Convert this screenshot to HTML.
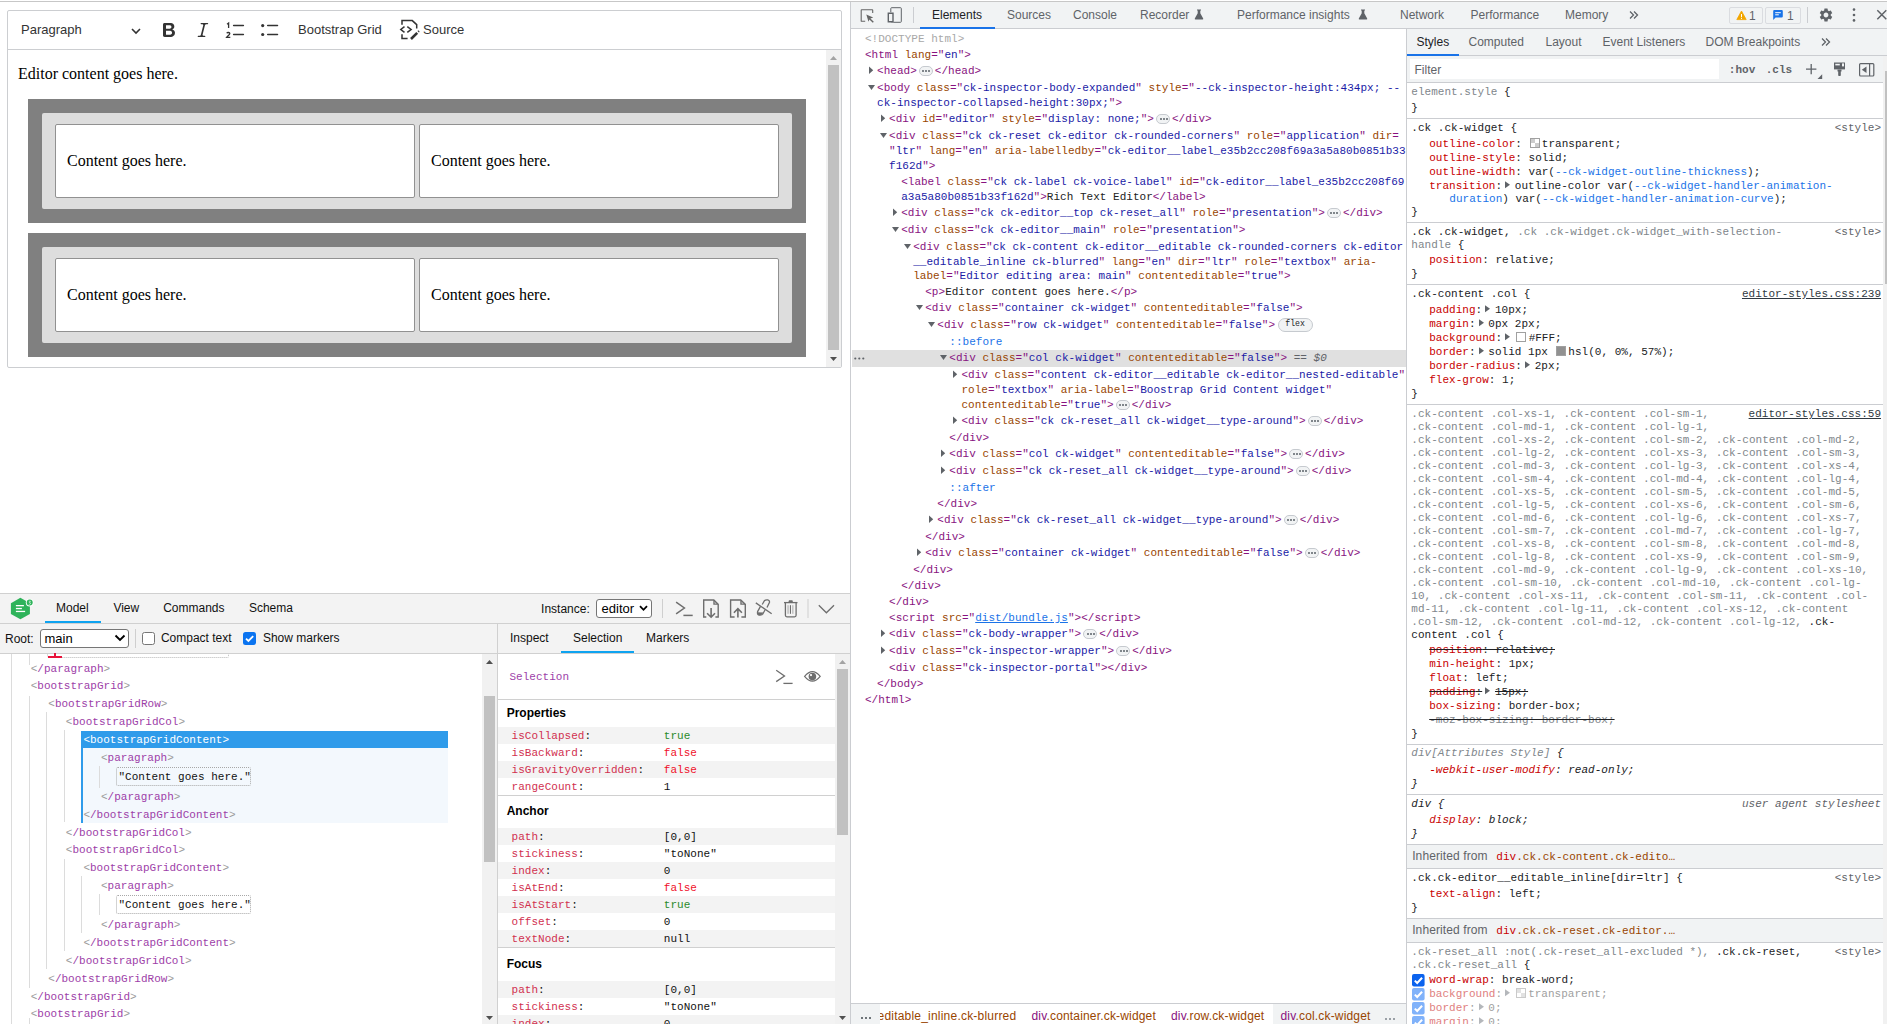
<!DOCTYPE html>
<html><head><meta charset="utf-8">
<style>
*{box-sizing:border-box}
html,body{margin:0;padding:0;width:1887px;height:1024px;overflow:hidden;background:#fff;position:relative}
.a{position:absolute}
.t{position:absolute;white-space:pre}
.col{position:absolute;background:#fff;border:1px solid #919191;border-radius:2px;width:360px;height:74px}
.tg{color:#881280}.an{color:#994500}.av{color:#1a1aa6}.tx{color:#222}
.el{display:inline-block;width:14px;height:10px;border:1px solid #c6cacf;border-radius:5px;background:#f1f3f4;margin:-6px 2px 0 2px;vertical-align:-2px;position:relative}
.el:after{content:"";position:absolute;left:2.5px;top:3px;width:2px;height:2px;background:#80868b;box-shadow:3px 0 0 #80868b,6px 0 0 #80868b}
</style></head><body>
<div class="a" style="left:0px;top:1px;width:1887px;height:1px;background:#c7c7c7;"></div>
<div class="a" style="left:7px;top:10px;width:835px;height:358px;background:none;border:1px solid #ccced1;border-radius:2px"></div>
<div class="a" style="left:8px;top:49px;width:833px;height:1px;background:#ccced1;"></div>
<div class="t" style="left:21px;top:23px;font:13px/13px 'Liberation Sans',sans-serif;color:#333;">Paragraph</div>
<svg class="a" style="left:130px;top:26px" width="12" height="10" viewBox="0 0 12 10"><path d="M2 3 L6 7 L10 3" fill="none" stroke="#333" stroke-width="1.6"/></svg>
<svg class="a" style="left:159px;top:20px" width="20" height="20" viewBox="0 0 20 20"><path fill="#333" d="M10.187 17H5.773c-.637 0-1.092-.138-1.364-.415-.273-.277-.409-.718-.409-1.323V4.738c0-.617.14-1.062.419-1.332.279-.27.73-.406 1.354-.406h4.68c.69 0 1.288.041 1.793.124.506.083.96.242 1.36.478.341.197.644.447.906.75a3.262 3.262 0 0 1 .808 2.162c0 1.401-.722 2.426-2.167 3.075C15.050 10.175 16 11.315 16 13.010a3.756 3.756 0 0 1-2.296 3.504 6.100 6.100 0 0 1-1.517.377c-.571.073-1.238.11-2 .11zm-.217-6.217H7v4.087h3.069c1.977 0 2.965-.69 2.965-2.072 0-.707-.256-1.220-.768-1.537-.512-.319-1.277-.478-2.296-.478zM7 5.130v3.619h2.606c.729 0 1.292-.067 1.690-.2a1.600 1.600 0 0 0 .910-.765c.165-.267.247-.566.247-.897 0-.707-.26-1.176-.778-1.409-.519-.232-1.310-.348-2.375-.348H7z"/></svg>
<svg class="a" style="left:193px;top:20px" width="20" height="20" viewBox="0 0 20 20"><path fill="#333" d="m9.586 14.633.021.004c-.036.335.095.655.393.962.082.083.173.15.274.201h1.474a.6.6 0 1 1 0 1.2H5.304a.6.6 0 0 1 0-1.2h1.15c.474-.07.809-.182 1.005-.334.157-.122.291-.32.404-.597l2.416-9.55a1.053 1.053 0 0 0-.281-.823 1.12 1.12 0 0 0-.442-.296H8.15a.6.6 0 0 1 0-1.2h6.443a.6.6 0 1 1 0 1.2h-1.195c-.376.056-.65.155-.823.296-.215.175-.423.439-.623.79l-2.366 9.347z"/></svg>
<svg class="a" style="left:220px;top:15px" width="70" height="30" viewBox="220 15 70 30"><g stroke="#333" stroke-width="1.5" stroke-linecap="round" fill="none"><path d="M233.6 25.6H243.4M233.6 34.5H243.4M267.7 25.6H277.5M267.7 34.5H277.5"/><path d="M227 24.2L228.6 23V28" stroke-width="1.3" stroke-linecap="butt"/><path d="M226.8 33.3C227.3 32.2 229.8 32.2 229.8 33.6C229.8 34.8 227.6 36 226.6 37.4H230.3" stroke-width="1.3" stroke-linecap="butt"/></g><circle cx="262.7" cy="25.6" r="1.6" fill="#333"/><circle cx="262.7" cy="34.5" r="1.6" fill="#333"/></svg>
<svg class="a" style="left:395px;top:15px" width="30" height="30" viewBox="395 15 30 30"><g stroke="#333" stroke-width="1.5" fill="none"><path d="M402 24.7V20.6H412.3L416.7 24.7V28.5"/><path d="M402 34.3V38.4H407.6"/><path d="M404.5 26.7L400.8 29.5L404.5 32.4M407.3 26.7L411.1 29.5L407.3 32.4"/><path d="M411 39L417.2 32.9" stroke-width="2.6"/><path d="M418.2 31.8L419 31" stroke-width="2"/></g></svg>
<div class="t" style="left:298px;top:23px;font:13px/13px 'Liberation Sans',sans-serif;color:#333;">Bootstrap Grid</div>
<div class="t" style="left:423px;top:23px;font:13px/13px 'Liberation Sans',sans-serif;color:#333;">Source</div>
<div class="t" style="left:18px;top:66px;font:16px/16px 'Liberation Serif',serif;color:#000;">Editor content goes here.</div>
<div class="a" style="left:28px;top:99px;width:778px;height:124px;background:#808080;"></div>
<div class="a" style="left:42px;top:113px;width:750px;height:96px;background:#dddddd;border-radius:2px"></div>
<div class="col" style="left:55px;top:124px"></div>
<div class="col" style="left:419px;top:124px"></div>
<div class="t" style="left:67px;top:153px;font:16px/16px 'Liberation Serif',serif;color:#000;">Content goes here.</div>
<div class="t" style="left:431px;top:153px;font:16px/16px 'Liberation Serif',serif;color:#000;">Content goes here.</div>
<div class="a" style="left:28px;top:233px;width:778px;height:124px;background:#808080;"></div>
<div class="a" style="left:42px;top:247px;width:750px;height:96px;background:#dddddd;border-radius:2px"></div>
<div class="col" style="left:55px;top:258px"></div>
<div class="col" style="left:419px;top:258px"></div>
<div class="t" style="left:67px;top:287px;font:16px/16px 'Liberation Serif',serif;color:#000;">Content goes here.</div>
<div class="t" style="left:431px;top:287px;font:16px/16px 'Liberation Serif',serif;color:#000;">Content goes here.</div>
<div class="a" style="left:826px;top:50px;width:15px;height:317px;background:#f1f1f1;"></div>
<div class="a" style="left:828px;top:65px;width:11px;height:285px;background:#c1c1c1;"></div>
<svg class="a" style="left:826px;top:50px" width="15" height="317"><path d="M4 10H11L7.5 6Z" fill="#a3a3a3"/><path d="M4 307H11L7.5 311Z" fill="#505050"/></svg>
<div class="a" style="left:850px;top:2px;width:1px;height:1022px;background:#cbcdd1;"></div>
<div class="a" style="left:851px;top:2px;width:1036px;height:26px;background:#f1f3f4;"></div>
<div class="a" style="left:851px;top:28px;width:1036px;height:1px;background:#cbcdd1;"></div>
<svg class="a" style="left:855px;top:3px" width="60" height="24" viewBox="855 3 60 24">
<path d="M865.2 21.3H861.6Q861.2 21.3 861.2 20.9V10.2Q861.2 9.8 861.6 9.8H872.3Q872.7 9.8 872.7 10.2V12.9" fill="none" stroke="#666" stroke-width="1.1"/>
<path d="M866.3 14.4L873.2 17.4L870.4 18.4L873.8 21.8L872.8 22.8L869.4 19.4L868.5 21.8Z" fill="#666"/>
<rect x="890.8" y="7.7" width="10.5" height="14.6" rx="0.8" fill="none" stroke="#5f6368" stroke-width="1"/>
<rect x="887.3" y="12.3" width="6.4" height="10.3" rx="0.6" fill="#f1f3f4"/>
<path d="M888.3 13.2H893V21.8H888.3Z" fill="none" stroke="#5f6368" stroke-width="1.4"/>
<rect x="913" y="7" width="1" height="16" fill="#cbcdd1"/>
</svg>
<div class="t" style="left:932px;top:9px;font:12px/12px 'Liberation Sans',sans-serif;color:#202124;">Elements</div>
<div class="t" style="left:1007px;top:9px;font:12px/12px 'Liberation Sans',sans-serif;color:#5f6368;">Sources</div>
<div class="t" style="left:1073px;top:9px;font:12px/12px 'Liberation Sans',sans-serif;color:#5f6368;">Console</div>
<div class="t" style="left:1140px;top:9px;font:12px/12px 'Liberation Sans',sans-serif;color:#5f6368;">Recorder</div>
<div class="t" style="left:1237px;top:9px;font:12px/12px 'Liberation Sans',sans-serif;color:#5f6368;">Performance insights</div>
<div class="t" style="left:1400px;top:9px;font:12px/12px 'Liberation Sans',sans-serif;color:#5f6368;">Network</div>
<div class="t" style="left:1470.5px;top:9px;font:12px/12px 'Liberation Sans',sans-serif;color:#5f6368;">Performance</div>
<div class="t" style="left:1565px;top:9px;font:12px/12px 'Liberation Sans',sans-serif;color:#5f6368;">Memory</div>
<div class="a" style="left:920px;top:27px;width:75px;height:2px;background:#1a73e8;"></div>
<svg class="a" style="left:1194px;top:9px" width="10" height="11" viewBox="0 0 10 11"><path d="M3 0.5H7V1.5H6.3V4.2L9.2 9.6Q9.5 10.5 8.6 10.5H1.4Q0.5 10.5 0.8 9.6L3.7 4.2V1.5H3Z" fill="#5f6368"/></svg>
<svg class="a" style="left:1358px;top:9px" width="10" height="11" viewBox="0 0 10 11"><path d="M3 0.5H7V1.5H6.3V4.2L9.2 9.6Q9.5 10.5 8.6 10.5H1.4Q0.5 10.5 0.8 9.6L3.7 4.2V1.5H3Z" fill="#5f6368"/></svg>
<svg class="a" style="left:1628px;top:9px" width="12" height="12" viewBox="0 0 12 12"><path d="M2 2.5L5.5 6L2 9.5M6 2.5L9.5 6L6 9.5" fill="none" stroke="#5f6368" stroke-width="1.3"/></svg>
<div class="a" style="left:1729px;top:7px;width:34px;height:17px;background:#f1f3f4;border:1px solid #dadce0;border-radius:2px"></div>
<svg class="a" style="left:1736px;top:10px" width="11" height="11" viewBox="0 0 11 11"><path d="M5.5 1L10.2 9.6H0.8Z" fill="#f2a600" stroke="#f2a600" stroke-width="0.8" stroke-linejoin="round"/><rect x="5" y="4" width="1" height="3.2" fill="#fff"/><rect x="5" y="7.9" width="1" height="1" fill="#fff"/></svg>
<div class="t" style="left:1749px;top:10px;font:12px/12px 'Liberation Sans',sans-serif;color:#5f6368;">1</div>
<div class="a" style="left:1765px;top:7px;width:36px;height:17px;background:#f1f3f4;border:1px solid #dadce0;border-radius:2px"></div>
<svg class="a" style="left:1772px;top:9px" width="12" height="12" viewBox="0 0 12 12"><path d="M2.3 1H9.7Q10.8 1 10.8 2.1V7.4Q10.8 8.5 9.7 8.5H3.6L1.2 10.9V2.1Q1.2 1 2.3 1Z" fill="#1a73e8"/><rect x="3.2" y="3.2" width="5.6" height="1" fill="#fff"/><rect x="3.2" y="5.3" width="3.6" height="1" fill="#fff"/></svg>
<div class="t" style="left:1787px;top:10px;font:12px/12px 'Liberation Sans',sans-serif;color:#5f6368;">1</div>
<div class="a" style="left:1807px;top:7px;width:1px;height:16px;background:#cbcdd1;"></div>
<svg class="a" style="left:1818px;top:7px" width="16" height="16" viewBox="0 0 24 24"><path fill="#5f6368" d="M19.14 12.94c.04-.3.06-.61.06-.94 0-.32-.02-.64-.07-.94l2.03-1.58a.49.49 0 0 0 .12-.61l-1.92-3.32a.488.488 0 0 0-.59-.22l-2.39.96c-.5-.38-1.03-.7-1.62-.94l-.36-2.54a.484.484 0 0 0-.48-.41h-3.84c-.24 0-.43.17-.47.41l-.36 2.54c-.59.24-1.13.57-1.62.94l-2.39-.96c-.22-.08-.47 0-.59.22L2.74 8.87c-.12.21-.08.47.12.61l2.03 1.58c-.05.3-.09.63-.09.94s.02.64.07.94l-2.03 1.58a.49.49 0 0 0-.12.61l1.92 3.32c.12.22.37.29.59.22l2.39-.96c.5.38 1.03.7 1.62.94l.36 2.54c.05.24.24.41.48.41h3.84c.24 0 .44-.17.47-.41l.36-2.54c.59-.24 1.13-.56 1.62-.94l2.39.96c.22.08.47 0 .59-.22l1.92-3.32c.12-.22.07-.47-.12-.61l-2.01-1.58zM12 15.6c-1.98 0-3.6-1.62-3.6-3.6s1.62-3.6 3.6-3.6 3.6 1.62 3.6 3.6-1.62 3.6-3.6 3.6z"/></svg>
<svg class="a" style="left:1850px;top:7px" width="8" height="16" viewBox="0 0 8 16"><circle cx="4" cy="2.6" r="1.3" fill="#5f6368"/><circle cx="4" cy="8" r="1.3" fill="#5f6368"/><circle cx="4" cy="13.4" r="1.3" fill="#5f6368"/></svg>
<svg class="a" style="left:1874px;top:7px" width="13" height="16" viewBox="0 0 13 16"><path d="M3.3 3.3L12.3 12.3M12.3 3.3L3.3 12.3" stroke="#5f6368" stroke-width="1.5"/></svg>
<div class="a" style="left:1406px;top:29px;width:1px;height:995px;background:#cbcdd1;"></div>
<div class="a" style="left:852px;top:350px;width:554px;height:17px;background:#e0e0e0;"></div>
<svg class="a" style="left:853px;top:356px" width="14" height="5"><circle cx="2.3" cy="2.5" r="1.1" fill="#5f6368"/><circle cx="6.3" cy="2.5" r="1.1" fill="#5f6368"/><circle cx="10.3" cy="2.5" r="1.1" fill="#5f6368"/></svg>
<div class="t" style="left:865.0px;top:34px;font:11px/11px 'Liberation Mono',monospace;color:#a8a8a8;letter-spacing:0.02px;">&lt;!DOCTYPE html&gt;</div>
<div class="t" style="left:865.0px;top:50px;font:11px/11px 'Liberation Mono',monospace;color:#222;letter-spacing:0.02px;"><span class="tg">&lt;html </span><span class="an">lang</span><span class="tg">="</span><span class="av">en</span><span class="tg">"&gt;</span></div>
<svg class="a" style="left:868.05px;top:66px" width="7" height="9"><path d="M1 0.4V7.9L5.2 4.15Z" fill="#5f6368"/></svg>
<div class="t" style="left:877.05px;top:66px;font:11px/11px 'Liberation Mono',monospace;color:#222;letter-spacing:0.02px;"><span class="tg">&lt;head&gt;</span><span class="el"></span><span class="tg">&lt;/head&gt;</span></div>
<svg class="a" style="left:867.05px;top:84px" width="9" height="7"><path d="M1 1H8L4.5 6Z" fill="#5f6368"/></svg>
<div class="t" style="left:877.05px;top:83px;font:11px/11px 'Liberation Mono',monospace;color:#222;letter-spacing:0.02px;"><span class="tg">&lt;body </span><span class="an">class</span><span class="tg">="</span><span class="av">ck-inspector-body-expanded</span><span class="tg">" </span><span class="an">style</span><span class="tg">="</span><span class="av">--ck-inspector-height:434px; --</span></div>
<div class="t" style="left:877.05px;top:98px;font:11px/11px 'Liberation Mono',monospace;color:#222;letter-spacing:0.02px;"><span class="av">ck-inspector-collapsed-height:30px;</span><span class="tg">"&gt;</span></div>
<svg class="a" style="left:880.10px;top:114px" width="7" height="9"><path d="M1 0.4V7.9L5.2 4.15Z" fill="#5f6368"/></svg>
<div class="t" style="left:889.1px;top:114px;font:11px/11px 'Liberation Mono',monospace;color:#222;letter-spacing:0.02px;"><span class="tg">&lt;div </span><span class="an">id</span><span class="tg">="</span><span class="av">editor</span><span class="tg">" </span><span class="an">style</span><span class="tg">="</span><span class="av">display: none;</span><span class="tg">"&gt;</span><span class="el"></span><span class="tg">&lt;/div&gt;</span></div>
<svg class="a" style="left:879.10px;top:132px" width="9" height="7"><path d="M1 1H8L4.5 6Z" fill="#5f6368"/></svg>
<div class="t" style="left:889.1px;top:131px;font:11px/11px 'Liberation Mono',monospace;color:#222;letter-spacing:0.02px;"><span class="tg">&lt;div </span><span class="an">class</span><span class="tg">="</span><span class="av">ck ck-reset ck-editor ck-rounded-corners</span><span class="tg">" </span><span class="an">role</span><span class="tg">="</span><span class="av">application</span><span class="tg">" </span><span class="an">dir</span><span class="tg">=</span></div>
<div class="t" style="left:889.1px;top:146px;font:11px/11px 'Liberation Mono',monospace;color:#222;letter-spacing:0.02px;"><span class="tg">"</span><span class="av">ltr</span><span class="tg">" </span><span class="an">lang</span><span class="tg">="</span><span class="av">en</span><span class="tg">" </span><span class="an">aria-labelledby</span><span class="tg">="</span><span class="av">ck-editor__label_e35b2cc208f69a3a5a80b0851b33</span></div>
<div class="t" style="left:889.1px;top:161px;font:11px/11px 'Liberation Mono',monospace;color:#222;letter-spacing:0.02px;"><span class="av">f162d</span><span class="tg">"&gt;</span></div>
<div class="t" style="left:901.15px;top:177px;font:11px/11px 'Liberation Mono',monospace;color:#222;letter-spacing:0.02px;"><span class="tg">&lt;label </span><span class="an">class</span><span class="tg">="</span><span class="av">ck ck-label ck-voice-label</span><span class="tg">" </span><span class="an">id</span><span class="tg">="</span><span class="av">ck-editor__label_e35b2cc208f69</span></div>
<div class="t" style="left:901.15px;top:192px;font:11px/11px 'Liberation Mono',monospace;color:#222;letter-spacing:0.02px;"><span class="av">a3a5a80b0851b33f162d</span><span class="tg">"&gt;</span><span class="tx">Rich Text Editor</span><span class="tg">&lt;/label&gt;</span></div>
<svg class="a" style="left:892.15px;top:208px" width="7" height="9"><path d="M1 0.4V7.9L5.2 4.15Z" fill="#5f6368"/></svg>
<div class="t" style="left:901.15px;top:208px;font:11px/11px 'Liberation Mono',monospace;color:#222;letter-spacing:0.02px;"><span class="tg">&lt;div </span><span class="an">class</span><span class="tg">="</span><span class="av">ck ck-editor__top ck-reset_all</span><span class="tg">" </span><span class="an">role</span><span class="tg">="</span><span class="av">presentation</span><span class="tg">"&gt;</span><span class="el"></span><span class="tg">&lt;/div&gt;</span></div>
<svg class="a" style="left:891.15px;top:226px" width="9" height="7"><path d="M1 1H8L4.5 6Z" fill="#5f6368"/></svg>
<div class="t" style="left:901.15px;top:225px;font:11px/11px 'Liberation Mono',monospace;color:#222;letter-spacing:0.02px;"><span class="tg">&lt;div </span><span class="an">class</span><span class="tg">="</span><span class="av">ck ck-editor__main</span><span class="tg">" </span><span class="an">role</span><span class="tg">="</span><span class="av">presentation</span><span class="tg">"&gt;</span></div>
<svg class="a" style="left:903.20px;top:243px" width="9" height="7"><path d="M1 1H8L4.5 6Z" fill="#5f6368"/></svg>
<div class="t" style="left:913.2px;top:242px;font:11px/11px 'Liberation Mono',monospace;color:#222;letter-spacing:0.02px;"><span class="tg">&lt;div </span><span class="an">class</span><span class="tg">="</span><span class="av">ck ck-content ck-editor__editable ck-rounded-corners ck-editor</span></div>
<div class="t" style="left:913.2px;top:257px;font:11px/11px 'Liberation Mono',monospace;color:#222;letter-spacing:0.02px;"><span class="av">__editable_inline ck-blurred</span><span class="tg">" </span><span class="an">lang</span><span class="tg">="</span><span class="av">en</span><span class="tg">" </span><span class="an">dir</span><span class="tg">="</span><span class="av">ltr</span><span class="tg">" </span><span class="an">role</span><span class="tg">="</span><span class="av">textbox</span><span class="tg">" </span><span class="an">aria-</span></div>
<div class="t" style="left:913.2px;top:271px;font:11px/11px 'Liberation Mono',monospace;color:#222;letter-spacing:0.02px;"><span class="an">label</span><span class="tg">="</span><span class="av">Editor editing area: main</span><span class="tg">" </span><span class="an">contenteditable</span><span class="tg">="</span><span class="av">true</span><span class="tg">"&gt;</span></div>
<div class="t" style="left:925.25px;top:287px;font:11px/11px 'Liberation Mono',monospace;color:#222;letter-spacing:0.02px;"><span class="tg">&lt;p&gt;</span><span class="tx">Editor content goes here.</span><span class="tg">&lt;/p&gt;</span></div>
<svg class="a" style="left:915.25px;top:304px" width="9" height="7"><path d="M1 1H8L4.5 6Z" fill="#5f6368"/></svg>
<div class="t" style="left:925.25px;top:303px;font:11px/11px 'Liberation Mono',monospace;color:#222;letter-spacing:0.02px;"><span class="tg">&lt;div </span><span class="an">class</span><span class="tg">="</span><span class="av">container ck-widget</span><span class="tg">" </span><span class="an">contenteditable</span><span class="tg">="</span><span class="av">false</span><span class="tg">"&gt;</span></div>
<svg class="a" style="left:927.30px;top:321px" width="9" height="7"><path d="M1 1H8L4.5 6Z" fill="#5f6368"/></svg>
<div class="a" style="left:1277.72px;top:318px;width:35px;height:14px;border:1px solid #c6cacf;border-radius:7px;background:#f1f3f4"></div>
<div class="t" style="left:1285.22px;top:319px;font:8.2px/10px 'Liberation Mono',monospace;color:#202124">flex</div>
<div class="t" style="left:937.3px;top:320px;font:11px/11px 'Liberation Mono',monospace;color:#222;letter-spacing:0.02px;"><span class="tg">&lt;div </span><span class="an">class</span><span class="tg">="</span><span class="av">row ck-widget</span><span class="tg">" </span><span class="an">contenteditable</span><span class="tg">="</span><span class="av">false</span><span class="tg">"&gt;</span></div>
<div class="t" style="left:949.35px;top:337px;font:11px/11px 'Liberation Mono',monospace;color:#1a73e8;letter-spacing:0.02px;">::before</div>
<svg class="a" style="left:939.35px;top:354px" width="9" height="7"><path d="M1 1H8L4.5 6Z" fill="#5f6368"/></svg>
<div class="t" style="left:949.35px;top:353px;font:11px/11px 'Liberation Mono',monospace;color:#222;letter-spacing:0.02px;"><span class="tg">&lt;div </span><span class="an">class</span><span class="tg">="</span><span class="av">col ck-widget</span><span class="tg">" </span><span class="an">contenteditable</span><span class="tg">="</span><span class="av">false</span><span class="tg">"&gt;</span><span style="color:#5f6368"> == <i>$0</i></span></div>
<svg class="a" style="left:952.40px;top:370px" width="7" height="9"><path d="M1 0.4V7.9L5.2 4.15Z" fill="#5f6368"/></svg>
<div class="t" style="left:961.4px;top:370px;font:11px/11px 'Liberation Mono',monospace;color:#222;letter-spacing:0.02px;"><span class="tg">&lt;div </span><span class="an">class</span><span class="tg">="</span><span class="av">content ck-editor__editable ck-editor__nested-editable</span><span class="tg">"</span></div>
<div class="t" style="left:961.4px;top:385px;font:11px/11px 'Liberation Mono',monospace;color:#222;letter-spacing:0.02px;"><span class="an">role</span><span class="tg">="</span><span class="av">textbox</span><span class="tg">" </span><span class="an">aria-label</span><span class="tg">="</span><span class="av">Boostrap Grid Content widget</span><span class="tg">"</span></div>
<div class="t" style="left:961.4px;top:400px;font:11px/11px 'Liberation Mono',monospace;color:#222;letter-spacing:0.02px;"><span class="an">contenteditable</span><span class="tg">="</span><span class="av">true</span><span class="tg">"&gt;</span><span class="el"></span><span class="tg">&lt;/div&gt;</span></div>
<svg class="a" style="left:952.40px;top:416px" width="7" height="9"><path d="M1 0.4V7.9L5.2 4.15Z" fill="#5f6368"/></svg>
<div class="t" style="left:961.4px;top:416px;font:11px/11px 'Liberation Mono',monospace;color:#222;letter-spacing:0.02px;"><span class="tg">&lt;div </span><span class="an">class</span><span class="tg">="</span><span class="av">ck ck-reset_all ck-widget__type-around</span><span class="tg">"&gt;</span><span class="el"></span><span class="tg">&lt;/div&gt;</span></div>
<div class="t" style="left:949.35px;top:433px;font:11px/11px 'Liberation Mono',monospace;color:#222;letter-spacing:0.02px;"><span class="tg">&lt;/div&gt;</span></div>
<svg class="a" style="left:940.35px;top:449px" width="7" height="9"><path d="M1 0.4V7.9L5.2 4.15Z" fill="#5f6368"/></svg>
<div class="t" style="left:949.35px;top:449px;font:11px/11px 'Liberation Mono',monospace;color:#222;letter-spacing:0.02px;"><span class="tg">&lt;div </span><span class="an">class</span><span class="tg">="</span><span class="av">col ck-widget</span><span class="tg">" </span><span class="an">contenteditable</span><span class="tg">="</span><span class="av">false</span><span class="tg">"&gt;</span><span class="el"></span><span class="tg">&lt;/div&gt;</span></div>
<svg class="a" style="left:940.35px;top:466px" width="7" height="9"><path d="M1 0.4V7.9L5.2 4.15Z" fill="#5f6368"/></svg>
<div class="t" style="left:949.35px;top:466px;font:11px/11px 'Liberation Mono',monospace;color:#222;letter-spacing:0.02px;"><span class="tg">&lt;div </span><span class="an">class</span><span class="tg">="</span><span class="av">ck ck-reset_all ck-widget__type-around</span><span class="tg">"&gt;</span><span class="el"></span><span class="tg">&lt;/div&gt;</span></div>
<div class="t" style="left:949.35px;top:483px;font:11px/11px 'Liberation Mono',monospace;color:#1a73e8;letter-spacing:0.02px;">::after</div>
<div class="t" style="left:937.3px;top:499px;font:11px/11px 'Liberation Mono',monospace;color:#222;letter-spacing:0.02px;"><span class="tg">&lt;/div&gt;</span></div>
<svg class="a" style="left:928.30px;top:515px" width="7" height="9"><path d="M1 0.4V7.9L5.2 4.15Z" fill="#5f6368"/></svg>
<div class="t" style="left:937.3px;top:515px;font:11px/11px 'Liberation Mono',monospace;color:#222;letter-spacing:0.02px;"><span class="tg">&lt;div </span><span class="an">class</span><span class="tg">="</span><span class="av">ck ck-reset_all ck-widget__type-around</span><span class="tg">"&gt;</span><span class="el"></span><span class="tg">&lt;/div&gt;</span></div>
<div class="t" style="left:925.25px;top:532px;font:11px/11px 'Liberation Mono',monospace;color:#222;letter-spacing:0.02px;"><span class="tg">&lt;/div&gt;</span></div>
<svg class="a" style="left:916.25px;top:548px" width="7" height="9"><path d="M1 0.4V7.9L5.2 4.15Z" fill="#5f6368"/></svg>
<div class="t" style="left:925.25px;top:548px;font:11px/11px 'Liberation Mono',monospace;color:#222;letter-spacing:0.02px;"><span class="tg">&lt;div </span><span class="an">class</span><span class="tg">="</span><span class="av">container ck-widget</span><span class="tg">" </span><span class="an">contenteditable</span><span class="tg">="</span><span class="av">false</span><span class="tg">"&gt;</span><span class="el"></span><span class="tg">&lt;/div&gt;</span></div>
<div class="t" style="left:913.2px;top:565px;font:11px/11px 'Liberation Mono',monospace;color:#222;letter-spacing:0.02px;"><span class="tg">&lt;/div&gt;</span></div>
<div class="t" style="left:901.15px;top:581px;font:11px/11px 'Liberation Mono',monospace;color:#222;letter-spacing:0.02px;"><span class="tg">&lt;/div&gt;</span></div>
<div class="t" style="left:889.1px;top:597px;font:11px/11px 'Liberation Mono',monospace;color:#222;letter-spacing:0.02px;"><span class="tg">&lt;/div&gt;</span></div>
<div class="t" style="left:889.1px;top:613px;font:11px/11px 'Liberation Mono',monospace;color:#222;letter-spacing:0.02px;"><span class="tg">&lt;script</span><span class="tg"> </span><span class="an">src</span><span class="tg">="</span><span style="color:#1a73e8;text-decoration:underline">dist/bundle.js</span><span class="tg">"&gt;&lt;/script&gt;</span></div>
<svg class="a" style="left:880.10px;top:629px" width="7" height="9"><path d="M1 0.4V7.9L5.2 4.15Z" fill="#5f6368"/></svg>
<div class="t" style="left:889.1px;top:629px;font:11px/11px 'Liberation Mono',monospace;color:#222;letter-spacing:0.02px;"><span class="tg">&lt;div </span><span class="an">class</span><span class="tg">="</span><span class="av">ck-body-wrapper</span><span class="tg">"&gt;</span><span class="el"></span><span class="tg">&lt;/div&gt;</span></div>
<svg class="a" style="left:880.10px;top:646px" width="7" height="9"><path d="M1 0.4V7.9L5.2 4.15Z" fill="#5f6368"/></svg>
<div class="t" style="left:889.1px;top:646px;font:11px/11px 'Liberation Mono',monospace;color:#222;letter-spacing:0.02px;"><span class="tg">&lt;div </span><span class="an">class</span><span class="tg">="</span><span class="av">ck-inspector-wrapper</span><span class="tg">"&gt;</span><span class="el"></span><span class="tg">&lt;/div&gt;</span></div>
<div class="t" style="left:889.1px;top:663px;font:11px/11px 'Liberation Mono',monospace;color:#222;letter-spacing:0.02px;"><span class="tg">&lt;div </span><span class="an">class</span><span class="tg">="</span><span class="av">ck-inspector-portal</span><span class="tg">"&gt;&lt;/div&gt;</span></div>
<div class="t" style="left:877.05px;top:679px;font:11px/11px 'Liberation Mono',monospace;color:#222;letter-spacing:0.02px;"><span class="tg">&lt;/body&gt;</span></div>
<div class="t" style="left:865.0px;top:695px;font:11px/11px 'Liberation Mono',monospace;color:#222;letter-spacing:0.02px;"><span class="tg">&lt;/html&gt;</span></div>
<div class="a" style="left:851px;top:1003px;width:555px;height:1px;background:#cbcdd1;"></div>
<div class="a" style="left:851px;top:1004px;width:29px;height:20px;background:#f1f3f4;"></div>
<svg class="a" style="left:859.5px;top:1016px" width="14" height="4"><rect x="1" y="1" width="2" height="2" fill="#6f757a"/><rect x="5" y="1" width="2" height="2" fill="#6f757a"/><rect x="9" y="1" width="2" height="2" fill="#6f757a"/></svg>
<div class="a" style="left:1273px;top:1004px;width:133px;height:20px;background:#f1f3f4;"></div>
<div class="a" style="left:880px;top:1004px;width:392px;height:20px;overflow:hidden"><div class="t" style="left:-2.5px;top:6px;font:12px/12px 'Liberation Sans',sans-serif;letter-spacing:0.21px;color:#994500">editable_inline.ck-blurred</div></div>
<div class="t" style="left:1031.5px;top:1010px;font:12px/12px 'Liberation Sans',sans-serif;color:#994500;letter-spacing:0.17px"><span style="color:#881280">div</span>.container.ck-widget</div>
<div class="t" style="left:1171px;top:1010px;font:12px/12px 'Liberation Sans',sans-serif;color:#994500;letter-spacing:0.17px"><span style="color:#881280">div</span>.row.ck-widget</div>
<div class="t" style="left:1280.5px;top:1010px;font:12px/12px 'Liberation Sans',sans-serif;color:#994500;letter-spacing:0.17px"><span style="color:#881280">div</span>.col.ck-widget</div>
<svg class="a" style="left:1384px;top:1017px" width="14" height="4"><rect x="1" y="1" width="2" height="2" fill="#9aa0a6"/><rect x="5" y="1" width="2" height="2" fill="#9aa0a6"/><rect x="9" y="1" width="2" height="2" fill="#9aa0a6"/></svg>
<div class="a" style="left:1407px;top:29px;width:480px;height:26px;background:#f1f3f4;"></div>
<div class="a" style="left:1407px;top:55px;width:480px;height:1px;background:#cbcdd1;"></div>
<div class="t" style="left:1416.5px;top:36px;font:12px/12px 'Liberation Sans',sans-serif;color:#202124;">Styles</div>
<div class="t" style="left:1468.5px;top:36px;font:12px/12px 'Liberation Sans',sans-serif;color:#5f6368;">Computed</div>
<div class="t" style="left:1545.5px;top:36px;font:12px/12px 'Liberation Sans',sans-serif;color:#5f6368;">Layout</div>
<div class="t" style="left:1602.5px;top:36px;font:12px/12px 'Liberation Sans',sans-serif;color:#5f6368;">Event Listeners</div>
<div class="t" style="left:1705.5px;top:36px;font:12px/12px 'Liberation Sans',sans-serif;color:#5f6368;">DOM Breakpoints</div>
<div class="a" style="left:1407px;top:54px;width:52px;height:2px;background:#1a73e8;"></div>
<svg class="a" style="left:1820px;top:36px" width="12" height="12" viewBox="0 0 12 12"><path d="M2 2.5L5.5 6L2 9.5M6 2.5L9.5 6L6 9.5" fill="none" stroke="#5f6368" stroke-width="1.3"/></svg>
<div class="a" style="left:1407px;top:56px;width:480px;height:26px;background:#f1f3f4;"></div>
<div class="a" style="left:1410px;top:59px;width:309px;height:20px;background:#fff;"></div>
<div class="t" style="left:1414.5px;top:64px;font:12px/12px 'Liberation Sans',sans-serif;color:#5f6368;">Filter</div>
<div class="t" style="left:1728.8px;top:65px;font:11px/11px 'Liberation Mono',monospace;color:#5f6368;letter-spacing:0.02px;font-weight:bold">:hov</div>
<div class="t" style="left:1765.7px;top:65px;font:11px/11px 'Liberation Mono',monospace;color:#5f6368;letter-spacing:0.02px;font-weight:bold">.cls</div>
<svg class="a" style="left:1800px;top:58px" width="80" height="24" viewBox="1800 58 80 24">
<path d="M1811.2 64V74.2M1806 69.1H1816.4" stroke="#5f6368" stroke-width="1.3"/>
<path d="M1817.5 79H1822.2V74.3Z" fill="#5f6368"/>
<path d="M1834 62.5H1845V69.4H1834Z" fill="#5f6368"/>
<rect x="1835.3" y="63.8" width="4.5" height="1.6" fill="#f1f3f4"/>
<rect x="1842" y="63.4" width="2" height="3" fill="#f1f3f4"/>
<path d="M1837.5 69.4H1841.5V71.5H1840.8V75.6Q1839.5 76.6 1838.2 75.6V71.5H1837.5Z" fill="#5f6368"/>
<rect x="1859.6" y="63.6" width="14.2" height="12.4" rx="1" fill="none" stroke="#5f6368" stroke-width="1.2"/>
<rect x="1869" y="63.6" width="1.2" height="12.4" fill="#5f6368"/>
<path d="M1861.8 69.8L1866.5 66.5V73.1Z" fill="#5f6368"/>
</svg>
<div class="a" style="left:1407px;top:82px;width:476px;height:1px;background:#cbcdd1;"></div>
<div class="a" style="left:1883px;top:56px;width:4px;height:968px;background:#f1f1f1;"></div>
<div class="a" style="left:1885px;top:71px;width:2px;height:213px;background:#c1c1c1;"></div>
<div class="t" style="left:1411.3px;top:87px;font:11px/11px 'Liberation Mono',monospace;color:#202124;letter-spacing:0.02px;"><span style="color:#80868b;">element.style</span> {</div>
<div class="t" style="left:1411.3px;top:103px;font:11px/11px 'Liberation Mono',monospace;color:#202124;letter-spacing:0.02px;">}</div>
<div class="a" style="left:1407px;top:118px;width:476px;height:1px;background:#cbcdd1;"></div>
<div class="t" style="left:1411.3px;top:123px;font:11px/11px 'Liberation Mono',monospace;color:#202124;letter-spacing:0.02px;">.ck .ck-widget {</div>
<div class="t" style="left:1834.66px;top:123px;font:11px/11px 'Liberation Mono',monospace;color:#5f6368;letter-spacing:0.02px;"><span style="color:#5f6368;">&lt;style&gt;</span></div>
<div class="t" style="left:1429.2px;top:139px;font:11px/11px 'Liberation Mono',monospace;color:#202124;letter-spacing:0.02px;"><span style="color:#c80000;">outline-color</span>: <span style="display:inline-block;width:10px;height:10px;border:1px solid #a0a0a0;background:#fff;margin:-6px 2px 0 1.3px;vertical-align:-1px;position:relative;"><span style="position:absolute;left:0;top:0;width:4px;height:4px;background:#ccc"></span><span style="position:absolute;left:4px;top:4px;width:4px;height:4px;background:#ccc"></span></span>transparent;</div>
<div class="t" style="left:1429.2px;top:153px;font:11px/11px 'Liberation Mono',monospace;color:#202124;letter-spacing:0.02px;"><span style="color:#c80000;">outline-style</span>: solid;</div>
<div class="t" style="left:1429.2px;top:167px;font:11px/11px 'Liberation Mono',monospace;color:#202124;letter-spacing:0.02px;"><span style="color:#c80000;">outline-width</span>: var(<span style="color:#1a73e8;">--ck-widget-outline-thickness</span>);</div>
<div class="t" style="left:1429.2px;top:181px;font:11px/11px 'Liberation Mono',monospace;color:#202124;letter-spacing:0.02px;"><span style="color:#c80000;">transition</span>:<span style="display:inline-block;width:12.8px;height:1px;position:relative;vertical-align:0;margin-top:-1px"><svg style="position:absolute;left:3px;top:-7px" width="6" height="8"><path d="M0 0.2V7.2L5 3.7Z" fill="#5f6368"/></svg></span>outline-color var(<span style="color:#1a73e8;">--ck-widget-handler-animation-</span></div>
<div class="t" style="left:1449.3px;top:194px;font:11px/11px 'Liberation Mono',monospace;color:#202124;letter-spacing:0.02px;"><span style="color:#1a73e8;">duration</span>) var(<span style="color:#1a73e8;">--ck-widget-handler-animation-curve</span>);</div>
<div class="t" style="left:1411.3px;top:207px;font:11px/11px 'Liberation Mono',monospace;color:#202124;letter-spacing:0.02px;">}</div>
<div class="a" style="left:1407px;top:222px;width:476px;height:1px;background:#cbcdd1;"></div>
<div class="t" style="left:1411.3px;top:227px;font:11px/11px 'Liberation Mono',monospace;color:#202124;letter-spacing:0.02px;">.ck .ck-widget, <span style="color:#80868b;">.ck .ck-widget.ck-widget_with-selection-</span></div>
<div class="t" style="left:1834.66px;top:227px;font:11px/11px 'Liberation Mono',monospace;color:#5f6368;letter-spacing:0.02px;"><span style="color:#5f6368;">&lt;style&gt;</span></div>
<div class="t" style="left:1411.3px;top:240px;font:11px/11px 'Liberation Mono',monospace;color:#202124;letter-spacing:0.02px;"><span style="color:#80868b;">handle</span> {</div>
<div class="t" style="left:1429.2px;top:255px;font:11px/11px 'Liberation Mono',monospace;color:#202124;letter-spacing:0.02px;"><span style="color:#c80000;">position</span>: relative;</div>
<div class="t" style="left:1411.3px;top:269px;font:11px/11px 'Liberation Mono',monospace;color:#202124;letter-spacing:0.02px;">}</div>
<div class="a" style="left:1407px;top:284px;width:476px;height:1px;background:#cbcdd1;"></div>
<div class="t" style="left:1411.3px;top:289px;font:11px/11px 'Liberation Mono',monospace;color:#202124;letter-spacing:0.02px;">.ck-content .col {</div>
<div class="t" style="left:1741.98px;top:289px;font:11px/11px 'Liberation Mono',monospace;color:#5f6368;letter-spacing:0.02px;"><span style="color:#303942;text-decoration:underline">editor-styles.css:239</span></div>
<div class="t" style="left:1429.2px;top:305px;font:11px/11px 'Liberation Mono',monospace;color:#202124;letter-spacing:0.02px;"><span style="color:#c80000;">padding</span>:<span style="display:inline-block;width:12.8px;height:1px;position:relative;vertical-align:0;margin-top:-1px"><svg style="position:absolute;left:3px;top:-7px" width="6" height="8"><path d="M0 0.2V7.2L5 3.7Z" fill="#5f6368"/></svg></span>10px;</div>
<div class="t" style="left:1429.2px;top:319px;font:11px/11px 'Liberation Mono',monospace;color:#202124;letter-spacing:0.02px;"><span style="color:#c80000;">margin</span>:<span style="display:inline-block;width:12.8px;height:1px;position:relative;vertical-align:0;margin-top:-1px"><svg style="position:absolute;left:3px;top:-7px" width="6" height="8"><path d="M0 0.2V7.2L5 3.7Z" fill="#5f6368"/></svg></span>0px 2px;</div>
<div class="t" style="left:1429.2px;top:333px;font:11px/11px 'Liberation Mono',monospace;color:#202124;letter-spacing:0.02px;"><span style="color:#c80000;">background</span>:<span style="display:inline-block;width:12.8px;height:1px;position:relative;vertical-align:0;margin-top:-1px"><svg style="position:absolute;left:3px;top:-7px" width="6" height="8"><path d="M0 0.2V7.2L5 3.7Z" fill="#5f6368"/></svg></span><span style="display:inline-block;width:10px;height:10px;border:1px solid #a0a0a0;background:#fff;margin:-6px 2.3px 0 1.5px;vertical-align:-1px"></span>#FFF;</div>
<div class="t" style="left:1429.2px;top:347px;font:11px/11px 'Liberation Mono',monospace;color:#202124;letter-spacing:0.02px;"><span style="color:#c80000;">border</span>:<span style="display:inline-block;width:12.8px;height:1px;position:relative;vertical-align:0;margin-top:-1px"><svg style="position:absolute;left:3px;top:-7px" width="6" height="8"><path d="M0 0.2V7.2L5 3.7Z" fill="#5f6368"/></svg></span>solid 1px <span style="display:inline-block;width:10px;height:10px;border:1px solid #a0a0a0;background:#919191;margin:-6px 2.3px 0 1.5px;vertical-align:-1px"></span>hsl(0, 0%, 57%);</div>
<div class="t" style="left:1429.2px;top:361px;font:11px/11px 'Liberation Mono',monospace;color:#202124;letter-spacing:0.02px;"><span style="color:#c80000;">border-radius</span>:<span style="display:inline-block;width:12.8px;height:1px;position:relative;vertical-align:0;margin-top:-1px"><svg style="position:absolute;left:3px;top:-7px" width="6" height="8"><path d="M0 0.2V7.2L5 3.7Z" fill="#5f6368"/></svg></span>2px;</div>
<div class="t" style="left:1429.2px;top:375px;font:11px/11px 'Liberation Mono',monospace;color:#202124;letter-spacing:0.02px;"><span style="color:#c80000;">flex-grow</span>: 1;</div>
<div class="t" style="left:1411.3px;top:389px;font:11px/11px 'Liberation Mono',monospace;color:#202124;letter-spacing:0.02px;">}</div>
<div class="a" style="left:1407px;top:404px;width:476px;height:1px;background:#cbcdd1;"></div>
<div class="t" style="left:1411.3px;top:409px;font:11px/11px 'Liberation Mono',monospace;color:#202124;letter-spacing:0.02px;"><span style="color:#80868b;">.ck-content .col-xs-1, .ck-content .col-sm-1,</span></div>
<div class="t" style="left:1411.3px;top:422px;font:11px/11px 'Liberation Mono',monospace;color:#202124;letter-spacing:0.02px;"><span style="color:#80868b;">.ck-content .col-md-1, .ck-content .col-lg-1,</span></div>
<div class="t" style="left:1411.3px;top:435px;font:11px/11px 'Liberation Mono',monospace;color:#202124;letter-spacing:0.02px;"><span style="color:#80868b;">.ck-content .col-xs-2, .ck-content .col-sm-2, .ck-content .col-md-2,</span></div>
<div class="t" style="left:1411.3px;top:448px;font:11px/11px 'Liberation Mono',monospace;color:#202124;letter-spacing:0.02px;"><span style="color:#80868b;">.ck-content .col-lg-2, .ck-content .col-xs-3, .ck-content .col-sm-3,</span></div>
<div class="t" style="left:1411.3px;top:461px;font:11px/11px 'Liberation Mono',monospace;color:#202124;letter-spacing:0.02px;"><span style="color:#80868b;">.ck-content .col-md-3, .ck-content .col-lg-3, .ck-content .col-xs-4,</span></div>
<div class="t" style="left:1411.3px;top:474px;font:11px/11px 'Liberation Mono',monospace;color:#202124;letter-spacing:0.02px;"><span style="color:#80868b;">.ck-content .col-sm-4, .ck-content .col-md-4, .ck-content .col-lg-4,</span></div>
<div class="t" style="left:1411.3px;top:487px;font:11px/11px 'Liberation Mono',monospace;color:#202124;letter-spacing:0.02px;"><span style="color:#80868b;">.ck-content .col-xs-5, .ck-content .col-sm-5, .ck-content .col-md-5,</span></div>
<div class="t" style="left:1411.3px;top:500px;font:11px/11px 'Liberation Mono',monospace;color:#202124;letter-spacing:0.02px;"><span style="color:#80868b;">.ck-content .col-lg-5, .ck-content .col-xs-6, .ck-content .col-sm-6,</span></div>
<div class="t" style="left:1411.3px;top:513px;font:11px/11px 'Liberation Mono',monospace;color:#202124;letter-spacing:0.02px;"><span style="color:#80868b;">.ck-content .col-md-6, .ck-content .col-lg-6, .ck-content .col-xs-7,</span></div>
<div class="t" style="left:1411.3px;top:526px;font:11px/11px 'Liberation Mono',monospace;color:#202124;letter-spacing:0.02px;"><span style="color:#80868b;">.ck-content .col-sm-7, .ck-content .col-md-7, .ck-content .col-lg-7,</span></div>
<div class="t" style="left:1411.3px;top:539px;font:11px/11px 'Liberation Mono',monospace;color:#202124;letter-spacing:0.02px;"><span style="color:#80868b;">.ck-content .col-xs-8, .ck-content .col-sm-8, .ck-content .col-md-8,</span></div>
<div class="t" style="left:1411.3px;top:552px;font:11px/11px 'Liberation Mono',monospace;color:#202124;letter-spacing:0.02px;"><span style="color:#80868b;">.ck-content .col-lg-8, .ck-content .col-xs-9, .ck-content .col-sm-9,</span></div>
<div class="t" style="left:1411.3px;top:565px;font:11px/11px 'Liberation Mono',monospace;color:#202124;letter-spacing:0.02px;"><span style="color:#80868b;">.ck-content .col-md-9, .ck-content .col-lg-9, .ck-content .col-xs-10,</span></div>
<div class="t" style="left:1411.3px;top:578px;font:11px/11px 'Liberation Mono',monospace;color:#202124;letter-spacing:0.02px;"><span style="color:#80868b;">.ck-content .col-sm-10, .ck-content .col-md-10, .ck-content .col-lg-</span></div>
<div class="t" style="left:1411.3px;top:591px;font:11px/11px 'Liberation Mono',monospace;color:#202124;letter-spacing:0.02px;"><span style="color:#80868b;">10, .ck-content .col-xs-11, .ck-content .col-sm-11, .ck-content .col-</span></div>
<div class="t" style="left:1411.3px;top:604px;font:11px/11px 'Liberation Mono',monospace;color:#202124;letter-spacing:0.02px;"><span style="color:#80868b;">md-11, .ck-content .col-lg-11, .ck-content .col-xs-12, .ck-content</span></div>
<div class="t" style="left:1748.6px;top:409px;font:11px/11px 'Liberation Mono',monospace;color:#5f6368;letter-spacing:0.02px;"><span style="color:#303942;text-decoration:underline">editor-styles.css:59</span></div>
<div class="t" style="left:1411.3px;top:617px;font:11px/11px 'Liberation Mono',monospace;color:#202124;letter-spacing:0.02px;"><span style="color:#80868b;">.col-sm-12, .ck-content .col-md-12, .ck-content .col-lg-12, </span>.ck-</div>
<div class="t" style="left:1411.3px;top:630px;font:11px/11px 'Liberation Mono',monospace;color:#202124;letter-spacing:0.02px;">content .col {</div>
<div class="t" style="left:1429.2px;top:645px;font:11px/11px 'Liberation Mono',monospace;color:#202124;letter-spacing:0.02px;text-decoration:line-through;"><span style="color:#c80000;">position</span>: relative;</div>
<div class="t" style="left:1429.2px;top:659px;font:11px/11px 'Liberation Mono',monospace;color:#202124;letter-spacing:0.02px;"><span style="color:#c80000;">min-height</span>: 1px;</div>
<div class="t" style="left:1429.2px;top:673px;font:11px/11px 'Liberation Mono',monospace;color:#202124;letter-spacing:0.02px;"><span style="color:#c80000;">float</span>: left;</div>
<div class="t" style="left:1429.2px;top:687px;font:11px/11px 'Liberation Mono',monospace;color:#202124;letter-spacing:0.02px;text-decoration:line-through;"><span style="color:#c80000;">padding</span>:<span style="display:inline-block;width:12.8px;height:1px;position:relative;vertical-align:0;margin-top:-1px"><svg style="position:absolute;left:3px;top:-7px" width="6" height="8"><path d="M0 0.2V7.2L5 3.7Z" fill="#5f6368"/></svg></span>15px;</div>
<div class="t" style="left:1429.2px;top:701px;font:11px/11px 'Liberation Mono',monospace;color:#202124;letter-spacing:0.02px;"><span style="color:#c80000;">box-sizing</span>: border-box;</div>
<div class="t" style="left:1429.2px;top:715px;font:11px/11px 'Liberation Mono',monospace;color:#202124;letter-spacing:0.02px;text-decoration:line-through;"><span style="color:#80868b;">-moz-box-sizing: border-box;</span></div>
<div class="t" style="left:1411.3px;top:729px;font:11px/11px 'Liberation Mono',monospace;color:#202124;letter-spacing:0.02px;">}</div>
<div class="a" style="left:1407px;top:744px;width:476px;height:1px;background:#cbcdd1;"></div>
<div class="t" style="left:1411.3px;top:748px;font:11px/11px 'Liberation Mono',monospace;color:#202124;letter-spacing:0.02px;font-style:italic;"><span style="color:#80868b;">div[Attributes Style]</span> {</div>
<div class="t" style="left:1429.2px;top:765px;font:11px/11px 'Liberation Mono',monospace;color:#202124;letter-spacing:0.02px;font-style:italic;"><span style="color:#c80000;">-webkit-user-modify</span>: read-only;</div>
<div class="t" style="left:1411.3px;top:779px;font:11px/11px 'Liberation Mono',monospace;color:#202124;letter-spacing:0.02px;font-style:italic;">}</div>
<div class="a" style="left:1407px;top:794px;width:476px;height:1px;background:#cbcdd1;"></div>
<div class="t" style="left:1411.3px;top:799px;font:11px/11px 'Liberation Mono',monospace;color:#202124;letter-spacing:0.02px;font-style:italic;">div {</div>
<div class="t" style="left:1741.98px;top:799px;font:11px/11px 'Liberation Mono',monospace;color:#5f6368;letter-spacing:0.02px;"><span style="color:#5f6368;font-style:italic;">user agent stylesheet</span></div>
<div class="t" style="left:1429.2px;top:815px;font:11px/11px 'Liberation Mono',monospace;color:#202124;letter-spacing:0.02px;font-style:italic;"><span style="color:#c80000;">display</span>: block;</div>
<div class="t" style="left:1411.3px;top:829px;font:11px/11px 'Liberation Mono',monospace;color:#202124;letter-spacing:0.02px;font-style:italic;">}</div>
<div class="a" style="left:1407px;top:844px;width:476px;height:1px;background:#cbcdd1;"></div>
<div class="a" style="left:1407px;top:845px;width:476px;height:23px;background:#f1f3f4;"></div>
<div class="t" style="left:1412.2px;top:850px;font:12px/12px 'Liberation Sans',sans-serif;color:#5f6368;letter-spacing:0.1px">Inherited from </div>
<div class="t" style="left:1496.3px;top:852px;font:11px/11px 'Liberation Mono',monospace;color:#202124;letter-spacing:0.02px;"><span style="color:#c80000;">div</span><span style="color:#994500;">.ck.ck-content.ck-edito…</span></div>
<div class="a" style="left:1407px;top:868px;width:476px;height:1px;background:#cbcdd1;"></div>
<div class="t" style="left:1411.3px;top:873px;font:11px/11px 'Liberation Mono',monospace;color:#202124;letter-spacing:0.02px;">.ck.ck-editor__editable_inline[dir=ltr] {</div>
<div class="t" style="left:1834.66px;top:873px;font:11px/11px 'Liberation Mono',monospace;color:#5f6368;letter-spacing:0.02px;"><span style="color:#5f6368;">&lt;style&gt;</span></div>
<div class="t" style="left:1429.2px;top:889px;font:11px/11px 'Liberation Mono',monospace;color:#202124;letter-spacing:0.02px;"><span style="color:#c80000;">text-align</span>: left;</div>
<div class="t" style="left:1411.3px;top:903px;font:11px/11px 'Liberation Mono',monospace;color:#202124;letter-spacing:0.02px;">}</div>
<div class="a" style="left:1407px;top:918px;width:476px;height:1px;background:#cbcdd1;"></div>
<div class="a" style="left:1407px;top:919px;width:476px;height:23px;background:#f1f3f4;"></div>
<div class="t" style="left:1412.2px;top:924px;font:12px/12px 'Liberation Sans',sans-serif;color:#5f6368;letter-spacing:0.1px">Inherited from </div>
<div class="t" style="left:1496.3px;top:926px;font:11px/11px 'Liberation Mono',monospace;color:#202124;letter-spacing:0.02px;"><span style="color:#c80000;">div</span><span style="color:#994500;">.ck.ck-reset.ck-editor.…</span></div>
<div class="a" style="left:1407px;top:942px;width:476px;height:1px;background:#cbcdd1;"></div>
<div class="t" style="left:1411.3px;top:947px;font:11px/11px 'Liberation Mono',monospace;color:#202124;letter-spacing:0.02px;"><span style="color:#80868b;">.ck-reset_all :not(.ck-reset_all-excluded *), </span>.ck.ck-reset,</div>
<div class="t" style="left:1834.66px;top:947px;font:11px/11px 'Liberation Mono',monospace;color:#5f6368;letter-spacing:0.02px;"><span style="color:#5f6368;">&lt;style&gt;</span></div>
<div class="t" style="left:1411.3px;top:960px;font:11px/11px 'Liberation Mono',monospace;color:#202124;letter-spacing:0.02px;"><span style="color:#80868b;">.ck.ck-reset_all</span> {</div>
<svg class="a" style="left:1411.5px;top:974px" width="13" height="13" viewBox="0 0 13 13"><rect x="0" y="0" width="12.6" height="12.6" rx="2" fill="#0b63ee"/><path d="M2.8 6.6L5.2 9L10.1 3.8" fill="none" stroke="#fff" stroke-width="2"/></svg>
<div class="t" style="left:1429.2px;top:975px;font:11px/11px 'Liberation Mono',monospace;color:#202124;letter-spacing:0.02px;"><span style="color:#c80000;">word-wrap</span>: break-word;</div>
<svg class="a" style="left:1411.5px;top:988px" width="13" height="13" viewBox="0 0 13 13"><rect x="0" y="0" width="12.6" height="12.6" rx="2" fill="#80b2fa"/><path d="M2.8 6.6L5.2 9L10.1 3.8" fill="none" stroke="#fff" stroke-width="2"/></svg>
<div class="t" style="left:1429.2px;top:989px;font:11px/11px 'Liberation Mono',monospace;color:#202124;letter-spacing:0.02px;"><span style="color:#e08080;">background</span><span style="color:#a0a0a0;">:</span><span style="display:inline-block;width:12.8px;height:1px;position:relative;vertical-align:0;margin-top:-1px"><svg style="position:absolute;left:3px;top:-7px" width="6" height="8"><path d="M0 0.2V7.2L5 3.7Z" fill="#b4b7bb"/></svg></span><span style="display:inline-block;width:10px;height:10px;border:1px solid #a0a0a0;background:#fff;margin:-6px 2px 0 1.3px;vertical-align:-1px;position:relative;opacity:0.55;"><span style="position:absolute;left:0;top:0;width:4px;height:4px;background:#ccc"></span><span style="position:absolute;left:4px;top:4px;width:4px;height:4px;background:#ccc"></span></span><span style="color:#a0a0a0;">transparent;</span></div>
<svg class="a" style="left:1411.5px;top:1002px" width="13" height="13" viewBox="0 0 13 13"><rect x="0" y="0" width="12.6" height="12.6" rx="2" fill="#80b2fa"/><path d="M2.8 6.6L5.2 9L10.1 3.8" fill="none" stroke="#fff" stroke-width="2"/></svg>
<div class="t" style="left:1429.2px;top:1003px;font:11px/11px 'Liberation Mono',monospace;color:#202124;letter-spacing:0.02px;"><span style="color:#e08080;">border</span><span style="color:#a0a0a0;">:</span><span style="display:inline-block;width:12.8px;height:1px;position:relative;vertical-align:0;margin-top:-1px"><svg style="position:absolute;left:3px;top:-7px" width="6" height="8"><path d="M0 0.2V7.2L5 3.7Z" fill="#b4b7bb"/></svg></span><span style="color:#a0a0a0;">0;</span></div>
<svg class="a" style="left:1411.5px;top:1016px" width="13" height="13" viewBox="0 0 13 13"><rect x="0" y="0" width="12.6" height="12.6" rx="2" fill="#80b2fa"/><path d="M2.8 6.6L5.2 9L10.1 3.8" fill="none" stroke="#fff" stroke-width="2"/></svg>
<div class="t" style="left:1429.2px;top:1017px;font:11px/11px 'Liberation Mono',monospace;color:#202124;letter-spacing:0.02px;"><span style="color:#e08080;">margin</span><span style="color:#a0a0a0;">:</span><span style="display:inline-block;width:12.8px;height:1px;position:relative;vertical-align:0;margin-top:-1px"><svg style="position:absolute;left:3px;top:-7px" width="6" height="8"><path d="M0 0.2V7.2L5 3.7Z" fill="#b4b7bb"/></svg></span><span style="color:#a0a0a0;">0;</span></div>
<div class="a" style="left:0px;top:593px;width:850px;height:1px;background:#d0d0d0;"></div>
<div class="a" style="left:0px;top:594px;width:850px;height:29px;background:#f3f3f3;"></div>
<div class="a" style="left:0px;top:623px;width:850px;height:1px;background:#d0d0d0;"></div>
<div class="a" style="left:0px;top:624px;width:850px;height:29px;background:#f3f3f3;"></div>
<div class="a" style="left:0px;top:653px;width:850px;height:1px;background:#d0d0d0;"></div>
<svg class="a" style="left:8px;top:595px" width="28" height="27" viewBox="8 595 28 27">
<path d="M20.4 597.8L29.9 603.2V614L20.4 619.3L10.9 614V603.2Z" fill="#2eb35a"/>
<rect x="15.9" y="605" width="8" height="1.3" fill="#fff"/>
<rect x="15.9" y="607.9" width="6" height="1.3" fill="#fff"/>
<rect x="15.9" y="610.8" width="9.2" height="1.3" fill="#fff"/>
<circle cx="29.7" cy="602.6" r="3.9" fill="#fff"/>
<circle cx="29.7" cy="602.6" r="3" fill="#2eb35a"/>
<path d="M28.8 601.2H30.5L29.3 602.5Q30.8 602.6 30.5 603.7Q30.1 604.6 28.8 604.2" fill="none" stroke="#fff" stroke-width="0.6"/>
</svg>
<div class="t" style="left:56px;top:602px;font:12px/12px 'Liberation Sans',sans-serif;color:#111;">Model</div>
<div class="t" style="left:113.4px;top:602px;font:12px/12px 'Liberation Sans',sans-serif;color:#111;">View</div>
<div class="t" style="left:163.2px;top:602px;font:12px/12px 'Liberation Sans',sans-serif;color:#111;">Commands</div>
<div class="t" style="left:248.9px;top:602px;font:12px/12px 'Liberation Sans',sans-serif;color:#111;">Schema</div>
<div class="a" style="left:45px;top:621px;width:56px;height:2px;background:#0ea3f0;"></div>
<div class="t" style="left:541.1px;top:603px;font:12px/12px 'Liberation Sans',sans-serif;color:#111;">Instance:</div>
<div class="a" style="left:596px;top:599px;width:56px;height:19px;background:#fff;border:1px solid #767676;border-radius:3px"></div>
<div class="t" style="left:601.6px;top:602px;font:13px/13px 'Liberation Sans',sans-serif;color:#000;">editor</div>
<svg class="a" style="left:638px;top:604px" width="12" height="9" viewBox="0 0 12 9"><path d="M2 2.2L5.5 5.8L9 2.2" fill="none" stroke="#000" stroke-width="1.8"/></svg>
<div class="a" style="left:662px;top:599px;width:1px;height:19px;background:#cfcfcf;"></div>
<svg class="a" style="left:670px;top:596px" width="170" height="25" viewBox="670 596 170 25">
<g fill="none" stroke="#6e6e6e" stroke-width="1.4">
<path d="M676.1 602.2L684.4 608L676.1 613.8" stroke-width="1.5"/>
<path d="M683.4 615.4H692.7" stroke-width="1.5"/>
<path d="M706.3 617H703.7V600H713.8L718.2 604.4V617H715.4"/>
<path d="M714 600.3V604.1H717.8"/>
<path d="M711.1 608V616.6M707.1 613.2L711.1 617.2L715 613.2" stroke-width="1.6"/>
<path d="M734.6 617H730.6V600H740.7L745.3 604.4V617H741.4"/>
<path d="M741 600.3V604.1H744.9"/>
<path d="M737.9 617.6V609M733.9 612.7L737.9 608.7L741.9 612.7" stroke-width="1.6"/>
<path d="M755.8 602.9L771.7 613.8" stroke-width="1.3"/>
<path d="M762.2 604.5L764.6 600.5Q765.4 599.7 767.8 599.9Q769.8 600.5 769.5 602.2L767 607.5" stroke-width="1.3"/>
<path d="M760.5 606.4L757.6 611.6Q756.9 614.8 759.6 615.2Q762.2 615.4 763.2 613.2L765 610" stroke-width="1.3"/>
<path d="M784 602.6H797.5" stroke-width="1.3"/>
<path d="M785.4 603V615.3Q785.4 616.8 786.9 616.8H794.6Q796.1 616.8 796.1 615.3V603" stroke-width="1.3"/>

<path d="M818.8 605.2L826.4 612.8L834 605.2" stroke-width="1.3"/>
</g>
<path d="M757.3 612.2Q756.9 614.9 759.6 615.2Q762 615.4 763.4 612.6Z" fill="#6e6e6e"/>
<rect x="787.5" y="605.2" width="1.1" height="8.6" fill="#b0b0b0"/><rect x="789.9" y="605.2" width="1.1" height="8.6" fill="#6e6e6e"/><rect x="792.3" y="605.2" width="1.1" height="8.6" fill="#b0b0b0"/>
<path d="M788.4 602.3L789 600.2H792.4L793 602.3Z" fill="#6e6e6e"/><rect x="807.5" y="599" width="1" height="19" fill="#cfcfcf"/>
</svg>
<div class="t" style="left:5px;top:633px;font:12px/12px 'Liberation Sans',sans-serif;color:#111;">Root:</div>
<div class="a" style="left:40px;top:629px;width:89px;height:19px;background:#fff;border:1px solid #767676;border-radius:3px"></div>
<div class="t" style="left:44.5px;top:632px;font:13px/13px 'Liberation Sans',sans-serif;color:#000;">main</div>
<svg class="a" style="left:113px;top:633px" width="14" height="10" viewBox="0 0 14 10"><path d="M2.5 2.5L7 7L11.5 2.5" fill="none" stroke="#000" stroke-width="1.9"/></svg>
<div class="a" style="left:135px;top:629px;width:1px;height:19px;background:#cfcfcf;"></div>
<div class="a" style="left:142px;top:632px;width:13px;height:13px;background:#fff;border:1px solid #767676;border-radius:2.5px"></div>
<div class="t" style="left:160.9px;top:632px;font:12px/12px 'Liberation Sans',sans-serif;color:#111;">Compact text</div>
<svg class="a" style="left:243px;top:632px" width="13" height="13" viewBox="0 0 13 13"><rect x="0" y="0" width="13" height="13" rx="2.5" fill="#0b74f0"/><path d="M3 6.6L5.4 9L10.2 4.2" fill="none" stroke="#fff" stroke-width="1.8"/></svg>
<div class="t" style="left:262.9px;top:632px;font:12px/12px 'Liberation Sans',sans-serif;color:#111;">Show markers</div>
<div class="a" style="left:497px;top:624px;width:1px;height:400px;background:#d0d0d0;"></div>
<div class="t" style="left:510px;top:632px;font:12px/12px 'Liberation Sans',sans-serif;color:#111;">Inspect</div>
<div class="t" style="left:573px;top:632px;font:12px/12px 'Liberation Sans',sans-serif;color:#111;">Selection</div>
<div class="t" style="left:646px;top:632px;font:12px/12px 'Liberation Sans',sans-serif;color:#111;">Markers</div>
<div class="a" style="left:561px;top:651px;width:73px;height:2px;background:#0ea3f0;"></div>
<div class="a" style="left:0px;top:654px;width:497px;height:370px;background:#fff;"></div>
<div class="a" style="left:0;top:654px;width:482px;height:20px;overflow:hidden"><div class="a" style="left:47px;top:-10px;width:182px;height:14px;border:1px dotted #b8b8b8;border-radius:2px"></div></div>
<div class="a" style="left:48px;top:656px;width:14px;height:2px;background:#e8133a;"></div>
<div class="a" style="left:54px;top:653px;width:2px;height:4px;background:#e8133a;"></div>
<div class="a" style="left:81px;top:731px;width:367px;height:17px;background:#2f9bea;"></div>
<div class="a" style="left:81px;top:748px;width:367px;height:75px;background:#f3f8fd;"></div>
<div class="a" style="left:81px;top:748px;width:2px;height:75px;background:#2f9bea;"></div>
<div class="a" style="left:11px;top:654px;width:1px;height:370px;background:#dcdcdc;"></div>
<div class="a" style="left:29px;top:654px;width:1px;height:11px;background:#dcdcdc;"></div>
<div class="a" style="left:29px;top:696px;width:1px;height:292px;background:#dcdcdc;"></div>
<div class="a" style="left:29px;top:1018px;width:1px;height:6px;background:#dcdcdc;"></div>
<div class="a" style="left:46px;top:712px;width:1px;height:257px;background:#dcdcdc;"></div>
<div class="a" style="left:64px;top:730px;width:1px;height:92px;background:#dcdcdc;"></div>
<div class="a" style="left:64px;top:858.6px;width:1px;height:92.79999999999995px;background:#dcdcdc;"></div>
<div class="a" style="left:81px;top:876.4px;width:1px;height:56.89999999999998px;background:#dcdcdc;"></div>
<div class="a" style="left:99px;top:765.8px;width:1px;height:22.0px;background:#dcdcdc;"></div>
<div class="a" style="left:99px;top:894px;width:1px;height:21.299999999999955px;background:#dcdcdc;"></div>
<div class="t" style="left:30.7px;top:664px;font:11px/11px 'Liberation Mono',monospace;color:#9d3ea8;letter-spacing:0.02px;"><span style="color:#9a9a9a">&lt;</span><span style="color:#9d3ea8">/paragraph</span><span style="color:#9a9a9a">&gt;</span></div>
<div class="t" style="left:30.7px;top:681px;font:11px/11px 'Liberation Mono',monospace;color:#9d3ea8;letter-spacing:0.02px;"><span style="color:#9a9a9a">&lt;</span><span style="color:#9d3ea8">bootstrapGrid</span><span style="color:#9a9a9a">&gt;</span></div>
<div class="t" style="left:48.26px;top:699px;font:11px/11px 'Liberation Mono',monospace;color:#9d3ea8;letter-spacing:0.02px;"><span style="color:#9a9a9a">&lt;</span><span style="color:#9d3ea8">bootstrapGridRow</span><span style="color:#9a9a9a">&gt;</span></div>
<div class="t" style="left:65.82px;top:717px;font:11px/11px 'Liberation Mono',monospace;color:#9d3ea8;letter-spacing:0.02px;"><span style="color:#9a9a9a">&lt;</span><span style="color:#9d3ea8">bootstrapGridCol</span><span style="color:#9a9a9a">&gt;</span></div>
<div class="t" style="left:83.38px;top:735px;font:11px/11px 'Liberation Mono',monospace;color:#fff;letter-spacing:0.02px;">&lt;bootstrapGridContent&gt;</div>
<div class="t" style="left:100.94px;top:753px;font:11px/11px 'Liberation Mono',monospace;color:#9d3ea8;letter-spacing:0.02px;"><span style="color:#9a9a9a">&lt;</span><span style="color:#9d3ea8">paragraph</span><span style="color:#9a9a9a">&gt;</span></div>
<div class="a" style="left:116px;top:767px;width:135px;height:19px;border:1px dotted #a8a8a8;border-radius:2px"></div>
<div class="t" style="left:118.5px;top:772px;font:11px/11px 'Liberation Mono',monospace;color:#111;letter-spacing:0.02px;">"Content goes here."</div>
<div class="t" style="left:100.94px;top:792px;font:11px/11px 'Liberation Mono',monospace;color:#9d3ea8;letter-spacing:0.02px;"><span style="color:#9a9a9a">&lt;</span><span style="color:#9d3ea8">/paragraph</span><span style="color:#9a9a9a">&gt;</span></div>
<div class="t" style="left:83.38px;top:810px;font:11px/11px 'Liberation Mono',monospace;color:#9d3ea8;letter-spacing:0.02px;"><span style="color:#9a9a9a">&lt;</span><span style="color:#9d3ea8">/bootstrapGridContent</span><span style="color:#9a9a9a">&gt;</span></div>
<div class="t" style="left:65.82px;top:828px;font:11px/11px 'Liberation Mono',monospace;color:#9d3ea8;letter-spacing:0.02px;"><span style="color:#9a9a9a">&lt;</span><span style="color:#9d3ea8">/bootstrapGridCol</span><span style="color:#9a9a9a">&gt;</span></div>
<div class="t" style="left:65.82px;top:845px;font:11px/11px 'Liberation Mono',monospace;color:#9d3ea8;letter-spacing:0.02px;"><span style="color:#9a9a9a">&lt;</span><span style="color:#9d3ea8">bootstrapGridCol</span><span style="color:#9a9a9a">&gt;</span></div>
<div class="t" style="left:83.38px;top:863px;font:11px/11px 'Liberation Mono',monospace;color:#9d3ea8;letter-spacing:0.02px;"><span style="color:#9a9a9a">&lt;</span><span style="color:#9d3ea8">bootstrapGridContent</span><span style="color:#9a9a9a">&gt;</span></div>
<div class="t" style="left:100.94px;top:881px;font:11px/11px 'Liberation Mono',monospace;color:#9d3ea8;letter-spacing:0.02px;"><span style="color:#9a9a9a">&lt;</span><span style="color:#9d3ea8">paragraph</span><span style="color:#9a9a9a">&gt;</span></div>
<div class="a" style="left:116px;top:895px;width:135px;height:19px;border:1px dotted #a8a8a8;border-radius:2px"></div>
<div class="t" style="left:118.5px;top:900px;font:11px/11px 'Liberation Mono',monospace;color:#111;letter-spacing:0.02px;">"Content goes here."</div>
<div class="t" style="left:100.94px;top:920px;font:11px/11px 'Liberation Mono',monospace;color:#9d3ea8;letter-spacing:0.02px;"><span style="color:#9a9a9a">&lt;</span><span style="color:#9d3ea8">/paragraph</span><span style="color:#9a9a9a">&gt;</span></div>
<div class="t" style="left:83.38px;top:938px;font:11px/11px 'Liberation Mono',monospace;color:#9d3ea8;letter-spacing:0.02px;"><span style="color:#9a9a9a">&lt;</span><span style="color:#9d3ea8">/bootstrapGridContent</span><span style="color:#9a9a9a">&gt;</span></div>
<div class="t" style="left:65.82px;top:956px;font:11px/11px 'Liberation Mono',monospace;color:#9d3ea8;letter-spacing:0.02px;"><span style="color:#9a9a9a">&lt;</span><span style="color:#9d3ea8">/bootstrapGridCol</span><span style="color:#9a9a9a">&gt;</span></div>
<div class="t" style="left:48.26px;top:974px;font:11px/11px 'Liberation Mono',monospace;color:#9d3ea8;letter-spacing:0.02px;"><span style="color:#9a9a9a">&lt;</span><span style="color:#9d3ea8">/bootstrapGridRow</span><span style="color:#9a9a9a">&gt;</span></div>
<div class="t" style="left:30.7px;top:992px;font:11px/11px 'Liberation Mono',monospace;color:#9d3ea8;letter-spacing:0.02px;"><span style="color:#9a9a9a">&lt;</span><span style="color:#9d3ea8">/bootstrapGrid</span><span style="color:#9a9a9a">&gt;</span></div>
<div class="t" style="left:30.7px;top:1009px;font:11px/11px 'Liberation Mono',monospace;color:#9d3ea8;letter-spacing:0.02px;"><span style="color:#9a9a9a">&lt;</span><span style="color:#9d3ea8">bootstrapGrid</span><span style="color:#9a9a9a">&gt;</span></div>
<div class="a" style="left:482px;top:654px;width:15px;height:370px;background:#f1f1f1;"></div>
<div class="a" style="left:484px;top:696px;width:11px;height:166px;background:#c1c1c1;"></div>
<svg class="a" style="left:482px;top:654px" width="15" height="370"><path d="M4 10H11L7.5 6Z" fill="#505050"/><path d="M4 362H11L7.5 366Z" fill="#505050"/></svg>
<div class="a" style="left:498px;top:654px;width:337px;height:370px;background:#fff;"></div>
<div class="t" style="left:509.5px;top:672px;font:11px/11px 'Liberation Mono',monospace;color:#9d3ea8;letter-spacing:0.02px;">Selection</div>
<svg class="a" style="left:770px;top:665px" width="56" height="25" viewBox="770 665 56 25">
<g fill="none" stroke="#6e6e6e" stroke-width="1.3"><path d="M776.2 670.3L784.5 676L776.2 681.6"/><path d="M783.4 683.4H792.6"/></g>
<path d="M804.6 676.4Q812.4 666.8 820.2 676.4Q812.4 686 804.6 676.4Z" fill="none" stroke="#6e6e6e" stroke-width="1.2"/>
<circle cx="812.4" cy="676.6" r="3.8" fill="#6e6e6e"/>
<circle cx="811" cy="675.1" r="1.1" fill="#fff"/>
</svg>
<div class="a" style="left:498px;top:699px;width:337px;height:1px;background:#d0d0d0;"></div>
<div class="t" style="left:506.7px;top:707px;font:12px/12px 'Liberation Sans',sans-serif;color:#000;font-weight:bold">Properties</div>
<div class="a" style="left:498px;top:727px;width:337px;height:17px;background:#f3f3f3;"></div>
<div class="t" style="left:511.6px;top:731px;font:11px/11px 'Liberation Mono',monospace;color:#111;letter-spacing:0.02px;"><span style="color:#d1304f">isCollapsed</span>:</div>
<div class="t" style="left:663.8px;top:731px;font:11px/11px 'Liberation Mono',monospace;color:#2a8a2a;letter-spacing:0.02px;">true</div>
<div class="t" style="left:511.6px;top:748px;font:11px/11px 'Liberation Mono',monospace;color:#111;letter-spacing:0.02px;"><span style="color:#d1304f">isBackward</span>:</div>
<div class="t" style="left:663.8px;top:748px;font:11px/11px 'Liberation Mono',monospace;color:#f0102a;letter-spacing:0.02px;">false</div>
<div class="a" style="left:498px;top:761px;width:337px;height:17px;background:#f3f3f3;"></div>
<div class="t" style="left:511.6px;top:765px;font:11px/11px 'Liberation Mono',monospace;color:#111;letter-spacing:0.02px;"><span style="color:#d1304f">isGravityOverridden</span>:</div>
<div class="t" style="left:663.8px;top:765px;font:11px/11px 'Liberation Mono',monospace;color:#f0102a;letter-spacing:0.02px;">false</div>
<div class="t" style="left:511.6px;top:782px;font:11px/11px 'Liberation Mono',monospace;color:#111;letter-spacing:0.02px;"><span style="color:#d1304f">rangeCount</span>:</div>
<div class="t" style="left:663.8px;top:782px;font:11px/11px 'Liberation Mono',monospace;color:#111;letter-spacing:0.02px;">1</div>
<div class="a" style="left:498px;top:795px;width:337px;height:1px;background:#d0d0d0;"></div>
<div class="t" style="left:506.7px;top:805px;font:12px/12px 'Liberation Sans',sans-serif;color:#000;font-weight:bold">Anchor</div>
<div class="a" style="left:498px;top:828px;width:337px;height:17px;background:#f3f3f3;"></div>
<div class="t" style="left:511.6px;top:832px;font:11px/11px 'Liberation Mono',monospace;color:#111;letter-spacing:0.02px;"><span style="color:#d1304f">path</span>:</div>
<div class="t" style="left:663.8px;top:832px;font:11px/11px 'Liberation Mono',monospace;color:#111;letter-spacing:0.02px;">[0,0]</div>
<div class="t" style="left:511.6px;top:849px;font:11px/11px 'Liberation Mono',monospace;color:#111;letter-spacing:0.02px;"><span style="color:#d1304f">stickiness</span>:</div>
<div class="t" style="left:663.8px;top:849px;font:11px/11px 'Liberation Mono',monospace;color:#111;letter-spacing:0.02px;">"toNone"</div>
<div class="a" style="left:498px;top:862px;width:337px;height:17px;background:#f3f3f3;"></div>
<div class="t" style="left:511.6px;top:866px;font:11px/11px 'Liberation Mono',monospace;color:#111;letter-spacing:0.02px;"><span style="color:#d1304f">index</span>:</div>
<div class="t" style="left:663.8px;top:866px;font:11px/11px 'Liberation Mono',monospace;color:#111;letter-spacing:0.02px;">0</div>
<div class="t" style="left:511.6px;top:883px;font:11px/11px 'Liberation Mono',monospace;color:#111;letter-spacing:0.02px;"><span style="color:#d1304f">isAtEnd</span>:</div>
<div class="t" style="left:663.8px;top:883px;font:11px/11px 'Liberation Mono',monospace;color:#f0102a;letter-spacing:0.02px;">false</div>
<div class="a" style="left:498px;top:896px;width:337px;height:17px;background:#f3f3f3;"></div>
<div class="t" style="left:511.6px;top:900px;font:11px/11px 'Liberation Mono',monospace;color:#111;letter-spacing:0.02px;"><span style="color:#d1304f">isAtStart</span>:</div>
<div class="t" style="left:663.8px;top:900px;font:11px/11px 'Liberation Mono',monospace;color:#2a8a2a;letter-spacing:0.02px;">true</div>
<div class="t" style="left:511.6px;top:917px;font:11px/11px 'Liberation Mono',monospace;color:#111;letter-spacing:0.02px;"><span style="color:#d1304f">offset</span>:</div>
<div class="t" style="left:663.8px;top:917px;font:11px/11px 'Liberation Mono',monospace;color:#111;letter-spacing:0.02px;">0</div>
<div class="a" style="left:498px;top:930px;width:337px;height:17px;background:#f3f3f3;"></div>
<div class="t" style="left:511.6px;top:934px;font:11px/11px 'Liberation Mono',monospace;color:#111;letter-spacing:0.02px;"><span style="color:#d1304f">textNode</span>:</div>
<div class="t" style="left:663.8px;top:934px;font:11px/11px 'Liberation Mono',monospace;color:#111;letter-spacing:0.02px;">null</div>
<div class="a" style="left:498px;top:947px;width:337px;height:1px;background:#d0d0d0;"></div>
<div class="t" style="left:506.7px;top:958px;font:12px/12px 'Liberation Sans',sans-serif;color:#000;font-weight:bold">Focus</div>
<div class="a" style="left:498px;top:981px;width:337px;height:17px;background:#f3f3f3;"></div>
<div class="t" style="left:511.6px;top:985px;font:11px/11px 'Liberation Mono',monospace;color:#111;letter-spacing:0.02px;"><span style="color:#d1304f">path</span>:</div>
<div class="t" style="left:663.8px;top:985px;font:11px/11px 'Liberation Mono',monospace;color:#111;letter-spacing:0.02px;">[0,0]</div>
<div class="t" style="left:511.6px;top:1002px;font:11px/11px 'Liberation Mono',monospace;color:#111;letter-spacing:0.02px;"><span style="color:#d1304f">stickiness</span>:</div>
<div class="t" style="left:663.8px;top:1002px;font:11px/11px 'Liberation Mono',monospace;color:#111;letter-spacing:0.02px;">"toNone"</div>
<div class="a" style="left:498px;top:1015px;width:337px;height:17px;background:#f3f3f3;"></div>
<div class="t" style="left:511.6px;top:1019px;font:11px/11px 'Liberation Mono',monospace;color:#111;letter-spacing:0.02px;"><span style="color:#d1304f">index</span>:</div>
<div class="t" style="left:663.8px;top:1019px;font:11px/11px 'Liberation Mono',monospace;color:#111;letter-spacing:0.02px;">0</div>
<div class="a" style="left:835px;top:654px;width:15px;height:370px;background:#f1f1f1;"></div>
<div class="a" style="left:837px;top:669px;width:11px;height:166px;background:#c1c1c1;"></div>
<svg class="a" style="left:835px;top:654px" width="15" height="370"><path d="M4 10H11L7.5 6Z" fill="#a3a3a3"/><path d="M4 362H11L7.5 366Z" fill="#505050"/></svg>
</body></html>
